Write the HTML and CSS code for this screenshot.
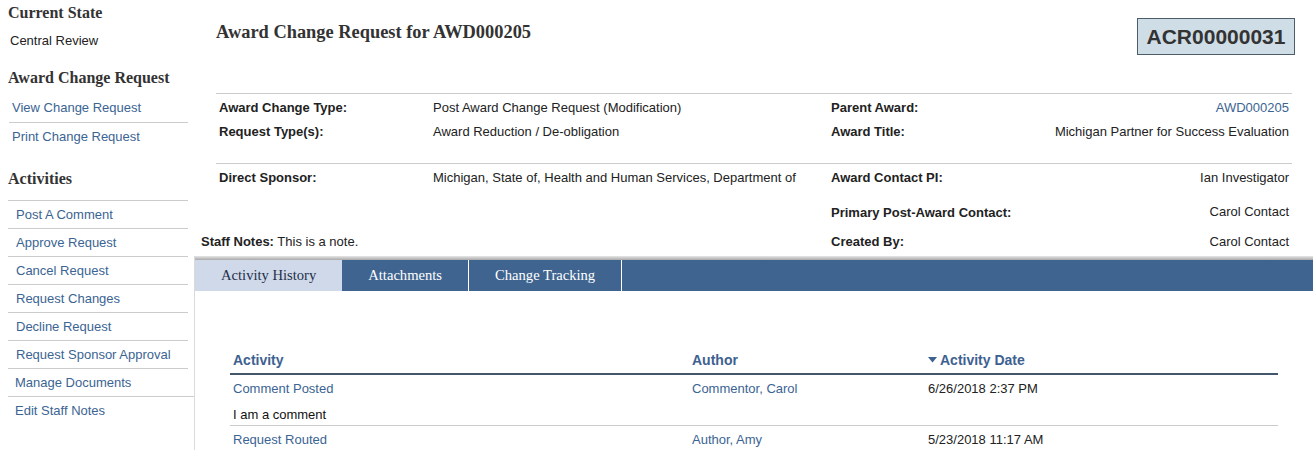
FILE: index.html
```html
<!DOCTYPE html>
<html lang="en">
<head>
    <meta charset="UTF-8">
    <title>Award Change Request ACR00000031</title>
    <link rel="stylesheet" href="styles.css">
</head>
<body>
    <div class="page">
        <!-- Left menu -->
        <aside class="sidebar">
            <h3 class="side-title first">Current State</h3>
            <p class="state">Central Review</p>

            <h3 class="side-title">Award Change Request</h3>
            <ul class="side-links compact">
                <li><a href="#">View Change Request</a></li>
                <li><a href="#">Print Change Request</a></li>
            </ul>

            <h3 class="side-title activities">Activities</h3>
            <ul class="side-links boxed">
                <li><a href="#">Post A Comment</a></li>
                <li><a href="#">Approve Request</a></li>
                <li><a href="#">Cancel Request</a></li>
                <li><a href="#">Request Changes</a></li>
                <li><a href="#">Decline Request</a></li>
                <li><a href="#">Request Sponsor Approval</a></li>
                <li class="wide"><a href="#">Manage Documents</a></li>
                <li class="wide last"><a href="#">Edit Staff Notes</a></li>
            </ul>
        </aside>

        <main class="main">
            <div class="page-head">
                <h1 class="page-title">Award Change Request for AWD000205</h1>
                <div class="record-id">ACR00000031</div>
            </div>

            <div class="info">
                <div class="info-section top">
                    <span class="label">Award Change Type:</span>
                    <span class="value">Post Award Change Request (Modification)</span>
                    <span class="label">Parent Award:</span>
                    <span class="value right"><a href="#">AWD000205</a></span>

                    <span class="label">Request Type(s):</span>
                    <span class="value">Award Reduction / De-obligation</span>
                    <span class="label">Award Title:</span>
                    <span class="value right">Michigan Partner for Success Evaluation</span>
                </div>

                <div class="info-section bottom">
                    <span class="label">Direct Sponsor:</span>
                    <span class="value">Michigan, State of, Health and Human Services, Department of</span>
                    <span class="label">Award Contact PI:</span>
                    <span class="value right">Ian Investigator</span>

                    <span class="label blank"></span>
                    <span class="value"></span>
                    <span class="label">Primary Post-Award Contact:</span>
                    <span class="value right lift">Carol Contact</span>

                    <span class="staff-notes"><b>Staff Notes:</b> This is a note.</span>
                    <span class="label">Created By:</span>
                    <span class="value right">Carol Contact</span>
                </div>
            </div>

            <div class="tab-panel">
                <div class="tab-bar">
                    <a href="#" class="tab active">Activity History</a>
                    <a href="#" class="tab">Attachments</a>
                    <a href="#" class="tab">Change Tracking</a>
                </div>

                <div class="tab-body">
                    <table class="history">
                        <thead>
                            <tr>
                                <th class="col-activity">Activity</th>
                                <th class="col-author">Author</th>
                                <th class="col-date">
                                    <svg class="sort" width="9" height="6" viewBox="0 0 9 6"><path d="M0 0H9L4.5 5.5Z" fill="#3d6190"/></svg>Activity Date
                                </th>
                            </tr>
                        </thead>
                        <tbody>
                            <tr class="event">
                                <td><a href="#">Comment Posted</a></td>
                                <td><a href="#">Commentor, Carol</a></td>
                                <td>6/26/2018 2:37 PM</td>
                            </tr>
                            <tr class="comment">
                                <td colspan="3">I am a comment</td>
                            </tr>
                            <tr class="event">
                                <td><a href="#">Request Routed</a></td>
                                <td><a href="#">Author, Amy</a></td>
                                <td>5/23/2018 11:17 AM</td>
                            </tr>
                        </tbody>
                    </table>
                </div>
            </div>
        </main>
    </div>
</body>
</html>
```

FILE: styles.css
```css
:root {
    --link: #3b6493;
    --head-blue: #3d6190;
    --tab-blue: #3f648f;
    --tab-active: #cfd9e9;
    --rule: #cccccc;
    --text: #222222;
}

* {
    margin: 0;
    padding: 0;
    box-sizing: border-box;
}

body {
    background: #fff;
    font-family: "Liberation Sans", Arial, sans-serif;
    font-size: 13px;
    color: var(--text);
    overflow: hidden;
}

a {
    color: var(--link);
    text-decoration: none;
}

.page {
    display: flex;
    min-height: 100vh;
}

/* Sidebar */
.sidebar {
    width: 194px;
    flex-shrink: 0;
    padding: 3px 0 0 8px;
}

.side-title {
    font-family: "Liberation Serif", "Times New Roman", serif;
    font-size: 16px;
    font-weight: bold;
    color: #333;
    line-height: 20px;
    margin-top: 17px;
}

.side-title.first {
    margin-top: 0;
}

.side-title.activities {
    margin-top: 18px;
}

.state {
    line-height: 20px;
    margin: 8px 0 0 2px;
}

.side-links {
    list-style: none;
    width: 180px;
}

.side-links.compact {
    margin-top: 6px;
}

.side-links.compact li {
    height: 28px;
    line-height: 28px;
    padding-left: 3px;
    margin-left: 1px;
}

.side-links.compact li:first-child {
    border-bottom: 1px solid var(--rule);
    height: 29px;
}

.side-links.boxed {
    margin-top: 11px;
    border-top: 1px solid var(--rule);
}

.side-links.boxed li {
    height: 28px;
    line-height: 27px;
    padding-left: 8px;
    border-bottom: 1px solid var(--rule);
}

.side-links.boxed li.wide {
    padding-left: 7px;
    width: 186px;
}

.side-links.boxed li.last {
    border-bottom: none;
}

/* Main area */
.main {
    flex: 1;
    min-width: 0;
}

.page-head {
    display: flex;
    justify-content: space-between;
    align-items: flex-start;
    padding: 18px 18px 38px 22px;
}

.page-title {
    font-family: "Liberation Serif", "Times New Roman", serif;
    font-size: 18.4px;
    font-weight: bold;
    color: #333;
    line-height: 22px;
    margin-top: 3px;
}

.record-id {
    height: 37px;
    width: 158px;
    line-height: 35px;
    text-align: center;
    font-size: 21px;
    font-weight: bold;
    color: #333;
    background: #cfdde6;
    border: 1px solid #4d5c6b;
}

/* Summary grid */
.info {
    margin: 0 21px 0 22px;
}

.info-section {
    display: grid;
    grid-template-columns: 214px 398px max-content 1fr;
    border-top: 1px solid var(--rule);
}

.info-section.top {
    grid-template-rows: 24px 24px;
    padding: 2px 0 19px;
}

.info-section.bottom {
    grid-template-rows: 24px 35px 29px;
    padding-top: 2px;
}

.info-section > span {
    line-height: 24px;
    align-self: end;
    white-space: nowrap;
}

.label {
    font-weight: bold;
    padding-left: 3px;
}

.value {
    padding-left: 3px;
}

.value.right {
    text-align: right;
    padding-right: 3px;
}

.value.lift {
    position: relative;
    top: -1px;
}

.staff-notes {
    grid-column: 1 / span 2;
    margin-left: -15px;
}

/* Tabs */
.tab-panel {
    margin-top: 2px;
    padding-top: 4px;
    border-left: 1px solid #dadada;
    background: linear-gradient(#e6e6e6, #a9a9a9) 0 0 / 100% 4px no-repeat;
}

.tab-bar {
    display: flex;
    height: 31px;
    background: var(--tab-blue);
}

.tab {
    font-family: "Liberation Serif", "Times New Roman", serif;
    font-size: 14.6px;
    line-height: 31px;
    color: #fff;
    padding: 0 26px;
    border-right: 1px solid #fff;
}

.tab.active {
    background: var(--tab-active);
    color: #1f2f4a;
    border-right: none;
}

.tab-body {
    padding: 55px 35px 0;
}

/* History table */
.history {
    width: 100%;
    border-collapse: collapse;
}

.history th {
    text-align: left;
    font-size: 14px;
    font-weight: bold;
    color: var(--head-blue);
    line-height: 20px;
    padding: 4px 3px 3px;
    border-bottom: 2px solid #44576a;
}

.col-activity {
    width: 459px;
}

.col-author {
    width: 236px;
}

.sort {
    margin-right: 3px;
    vertical-align: 2px;
}

.history td {
    line-height: 20px;
    padding: 4px 3px 0;
    vertical-align: top;
}

.history tr.comment td {
    padding: 6px 3px 0;
    color: #111;
    border-bottom: 1px solid var(--rule);
}
```
